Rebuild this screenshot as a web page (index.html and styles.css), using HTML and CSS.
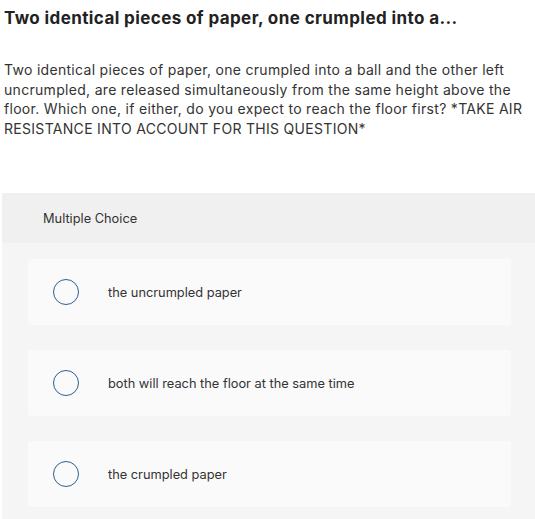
FILE: index.html
```html
<!DOCTYPE html>
<html lang="en">
<head>
    <meta charset="UTF-8">
    <meta name="viewport" content="width=device-width, initial-scale=1.0">
    <title>Question</title>
    <link rel="stylesheet" href="styles.css">
</head>
<body>
    <div class="question">
        <h1 class="question-title">Two identical pieces of paper, one crumpled into a...</h1>

        <p class="question-text">Two identical pieces of paper, one crumpled into a ball and the other left uncrumpled, are released simultaneously from the same height above the floor. Which one, if either, do you expect to reach the floor first? *TAKE AIR RESISTANCE INTO ACCOUNT FOR THIS QUESTION*</p>

        <div class="answer-panel">
            <div class="answer-header">Multiple Choice</div>

            <div class="answer-list">
                <label class="choice">
                    <span class="radio"></span>
                    <span class="choice-text">the uncrumpled paper</span>
                </label>
                <label class="choice">
                    <span class="radio"></span>
                    <span class="choice-text">both will reach the floor at the same time</span>
                </label>
                <label class="choice">
                    <span class="radio"></span>
                    <span class="choice-text">the crumpled paper</span>
                </label>
            </div>
        </div>
    </div>
</body>
</html>
```

FILE: styles.css
```css
body {
    font-family: 'Inter', 'Open Sans', sans-serif;
    margin: 0;
    background-color: #fff;
    color: #333;
}

.question {
    padding: 0 0 0 2px;
}

.question-title {
    font-size: 17px;
    font-weight: 700;
    letter-spacing: 0.4px;
    color: #222;
    margin: 0;
    padding: 6px 2px 0;
    line-height: 24px;
}

.question-text {
    font-size: 14px;
    line-height: 19.5px;
    letter-spacing: 0.3px;
    color: #333;
    margin: 30px 0 0;
    padding: 0 2px;
}

.answer-panel {
    margin-top: 55px;
    background-color: #f5f5f5;
}

.answer-header {
    background-color: #f0f0f0;
    height: 50px;
    padding-left: 41px;
    display: flex;
    align-items: center;
    font-size: 12.8px;
    color: #333;
}

.answer-list {
    display: flex;
    flex-direction: column;
    gap: 25px;
    padding: 16px 24px 12px 26px;
}

.choice {
    display: flex;
    align-items: center;
    height: 66px;
    background-color: #fafafa;
    border-radius: 3px;
    padding-left: 25px;
    cursor: pointer;
}

.radio {
    width: 24px;
    height: 24px;
    border: 1.5px solid #2d5f91;
    border-radius: 50%;
    flex-shrink: 0;
}

.choice-text {
    margin-left: 29px;
    font-size: 12.8px;
    color: #333;
}
```
